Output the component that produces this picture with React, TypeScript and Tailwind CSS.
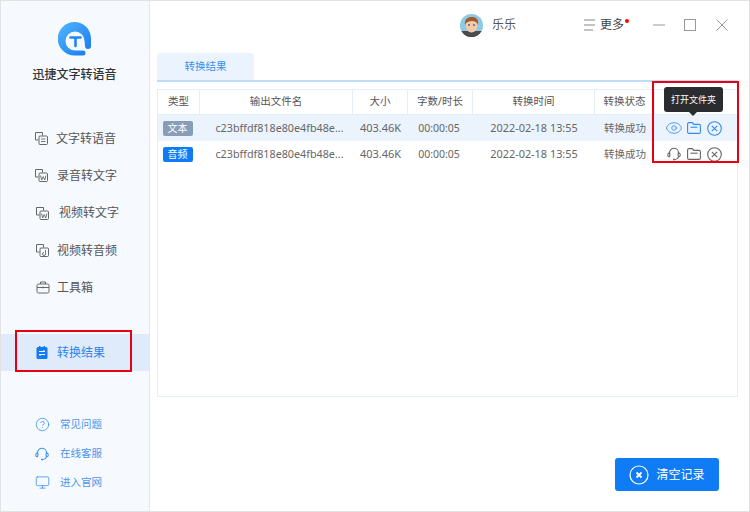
import { Eye, CircleHelp, Monitor } from 'lucide-react'

const font = { fontFamily: '"Noto Sans", "Noto Sans CJK SC", sans-serif' }

function DocIcon({ glyph }: { glyph: string }) {
  return (
    <svg width="15" height="15" viewBox="0 0 15 15" fill="none" stroke="#666" strokeWidth="1">
      <path d="M4.500 9H1.500V1.500h7v3" />
      <rect x="5" y="5" width="8.500" height="8.500" rx="1" />
      <path d={glyph} strokeWidth="0.9" />
    </svg>
  )
}

function HeadsetIcon({ color, size }: { color: string; size: number }) {
  return (
    <svg width={size} height={size} viewBox="0 0 14 14" fill="none" stroke={color} strokeWidth="1.100">
      <path d="M2.500 7V5.800a4.500 4.500 0 0 1 9 0V7" />
      <path d="M2.500 5.500C1.300 6 .7 7 .7 8s.7 1.700 1.800 1.800c.5-1.300.5-3 0-4.300z" />
      <path d="M11.500 5.500c1.200.5 1.800 1.500 1.800 2.500s-.7 1.700-1.800 1.800c-.5-1.300-.5-3 0-4.300z" />
      <path d="M11.500 10c-.7 1.500-2 2.500-3.500 2.500" />
      <circle cx="7" cy="12.500" r="1" fill={color} stroke="none" />
    </svg>
  )
}

function FolderIcon({ color }: { color: string }) {
  return (
    <svg width="14" height="12" viewBox="0 0 14 12" fill="none" stroke={color} strokeWidth="1.100">
      <path d="M.6 2A1.400 1.400 0 0 1 2 .6h3.300L6.800 2.400H12A1.400 1.400 0 0 1 13.400 3.800V10A1.400 1.400 0 0 1 12 11.400H2A1.400 1.400 0 0 1 .6 10z" />
      <path d="M3.500 5.200h7" />
    </svg>
  )
}

function CloseIcon({ color }: { color: string }) {
  return (
    <svg width="15" height="15" viewBox="0 0 15 15" fill="none" stroke={color} strokeWidth="1.100">
      <circle cx="7.500" cy="7.500" r="6.800" />
      <path d="M4.800 4.800l5.400 5.400M10.200 4.800l-5.400 5.400" />
    </svg>
  )
}

const navItems = [
  { label: '文字转语音', glyph: 'M7 8h4.500M7 10.500h4.500', ml: 'ml-[33px]', gap: 'gap-[7px]' },
  { label: '录音转文字', glyph: 'M6.500 7.500l1.200 4.500 1.500-3.500 1.500 3.500 1.300-4.500', ml: 'ml-[33px]', gap: 'gap-[8px]' },
  { label: '视频转文字', glyph: 'M6.500 7.500l1.200 4.500 1.500-3.500 1.500 3.500 1.300-4.500', ml: 'ml-[34px]', gap: 'gap-[9px]' },
  { label: '视频转音频', glyph: 'M10.500 7v4M10.500 11a1.500 1.500 0 1 1-1.500-1.500', ml: 'ml-[34px]', gap: 'gap-[7px]' },
]

function Sidebar() {
  return (
    <aside className="flex h-full w-[149px] shrink-0 flex-col border-r border-[#dfe9f5] bg-[#f6faff]">
      <div className="mt-[21px] flex flex-col items-center pr-[1px]">
        <svg width="34" height="34" viewBox="0 0 34 34" fill="none">
          <defs>
            <linearGradient id="lg" x1="0" y1="0" x2="1" y2="1">
              <stop offset="0" stopColor="#52b8fb" />
              <stop offset="1" stopColor="#1678f0" />
            </linearGradient>
          </defs>
          <path
            fill="url(#lg)"
            d="M16.500 0A16.500 16.500 0 0 1 33 16.500V24a3 3 0 0 1-6 0L26.500 19A9.500 9.500 0 1 0 17 28.500H25a2.500 2.500 0 0 1 0 5H16.500A16.500 16.500 0 0 1 16.500 0z"
          />
          <path d="M12.500 15.500h10M17.500 16v8" stroke="#1e86f5" strokeWidth="2.600" strokeLinecap="round" />
        </svg>
        <div className="mt-[10px] text-[12px] font-medium leading-[18px] text-[#333]">迅捷文字转语音</div>
      </div>

      <nav className="mt-[36px] flex flex-col">
        {navItems.map((item) => (
          <div key={item.label} className={`flex h-[37.300px] items-center ${item.ml} ${item.gap} text-[12px] text-[#555]`}>
            <DocIcon glyph={item.glyph} />
            <span>{item.label}</span>
          </div>
        ))}
        <div className="ml-[35px] flex h-[37.300px] items-center gap-[7px] text-[12px] text-[#555]">
          <svg width="14" height="13" viewBox="0 0 14 13" fill="none" stroke="#666">
            <rect x="1" y="3" width="12" height="9" rx="1.500" />
            <path d="M4.500 3V1h5v2M1 6.500h12M7 5.500v2" />
          </svg>
          <span>工具箱</span>
        </div>
      </nav>

      <div className="mt-[28px] flex h-[37px] items-center gap-[9px] bg-[#dfeafa] pl-[35px] text-[12px] text-[#2a86ee]">
        <svg width="12" height="13" viewBox="0 0 12 13">
          <rect x="0.500" y="1" width="11" height="12" rx="1.500" fill="#0f7bf5" />
          <rect x="3" y="0" width="1.500" height="2.500" fill="#0f7bf5" />
          <rect x="7.500" y="0" width="1.500" height="2.500" fill="#0f7bf5" />
          <path d="M3 5.500h6l-1.500-1M9 8.500H3l1.500 1" stroke="#fff" fill="none" />
        </svg>
        <span>转换结果</span>
      </div>

      <div className="mt-[39px] flex flex-col text-[10.500px] text-[#4a94ec]">
        <div className="flex h-[29px] items-center gap-[10px] pl-[34px]">
          <CircleHelp size={15} strokeWidth={1.300} color="#3f93f0" />
          <span>常见问题</span>
        </div>
        <div className="flex h-[29px] items-center gap-[11px] pl-[34px]">
          <HeadsetIcon color="#3f93f0" size={14} />
          <span>在线客服</span>
        </div>
        <div className="flex h-[29px] items-center gap-[10px] pl-[34px]">
          <Monitor size={15} strokeWidth={1.300} color="#3f93f0" />
          <span>进入官网</span>
        </div>
      </div>
    </aside>
  )
}

function TopBar() {
  return (
    <div className="flex h-[52px] items-center pb-[4px]">
      <svg className="ml-[311px]" width="23" height="23" viewBox="0 0 23 23">
        <defs>
          <clipPath id="av"><circle cx="11.500" cy="11.500" r="11.500" /></clipPath>
        </defs>
        <g clipPath="url(#av)">
          <rect width="23" height="23" fill="#8cc9e4" />
          <rect y="17" width="23" height="6" fill="#4b4b4b" />
          <ellipse cx="11.500" cy="11.500" rx="6" ry="7" fill="#f3c9a8" />
          <path d="M5 11C4 4 9 3 12 3s7 1 6 8c-1-3-3-4-6-4s-6 1-7 4z" fill="#a45a2a" />
          <circle cx="9" cy="11" r="1" fill="#4b6a9a" />
          <circle cx="14" cy="11" r="1" fill="#4b6a9a" />
        </g>
      </svg>
      <span className="ml-[9px] text-[12px] text-[#555]">乐乐</span>
      <svg className="ml-[68px]" width="12" height="12" viewBox="0 0 12 12" stroke="#888" strokeWidth="1.200">
        <path d="M0 1h11M0 6h11M0 11h9" />
      </svg>
      <span className="relative ml-[4px] text-[12px] text-[#444]">
        更多
        <span className="absolute right-[-5px] top-[3px] h-[4px] w-[4px] rounded-full bg-[#f00]" />
      </span>
      <svg className="ml-[29px]" width="12" height="12" viewBox="0 0 12 12" stroke="#999">
        <path d="M0 6h12" />
      </svg>
      <svg className="ml-[19px]" width="12" height="12" viewBox="0 0 12 12" fill="none" stroke="#999">
        <rect x="0.500" y="0.500" width="11" height="11" />
      </svg>
      <svg className="ml-[20px]" width="12" height="12" viewBox="0 0 12 12" stroke="#999">
        <path d="M.5.5l11 11M11.500.5l-11 11" />
      </svg>
    </div>
  )
}

const cols = ['w-[42px]', 'w-[153px]', 'w-[55px]', 'w-[65px]', 'w-[122px]', 'w-[60px]']
const headers = ['类型', '输出文件名', '大小', '字数/时长', '转换时间', '转换状态']

function Row({ active }: { active?: boolean }) {
  const stroke = active ? '#2f8cf0' : '#666'
  return (
    <div className={`flex h-[26px] items-center leading-[16px] text-[#666] ${active ? 'bg-[#ebf3fd]' : ''}`}>
      <div className={`${cols[0]} flex justify-center pr-[3px]`}>
        <span className={`flex h-[15px] w-[30px] items-center justify-center rounded-[2px] text-[10px] text-white ${active ? 'bg-[#8a9db8]' : 'bg-[#0f7bf5]'}`}>
          {active ? '文本' : '音频'}
        </span>
      </div>
      <div className={`${cols[1]} pl-[6px] text-center text-[10.750px]`}>c23bffdf818e80e4fb48e...</div>
      <div className={`${cols[2]} text-center text-[11px]`}>403.46K</div>
      <div className={`${cols[3]} pr-[3px] text-center text-[10.500px]`}>00:00:05</div>
      <div className={`${cols[4]} text-center text-[10.900px]`}>2022-02-18 13:55</div>
      <div className={`${cols[5]} text-center text-[10.500px]`}>转换成功</div>
      <div className="flex flex-1 items-center pl-[8px]">
        <span className="flex w-[22px] justify-center pr-[1px]">
          {active ? <Eye size={18} strokeWidth={1.100} color={stroke} /> : <HeadsetIcon color={stroke} size={14} />}
        </span>
        <span className="ml-[2px]"><FolderIcon color={stroke} /></span>
        <span className="ml-[6px]"><CloseIcon color={stroke} /></span>
      </div>
    </div>
  )
}

function Results() {
  return (
    <div className="relative flex-1 pl-[8px] pr-[11px]">
      <div className="border-b-2 border-[#bcdcf9]">
        <div className="flex h-[27px] w-[97px] items-center justify-center rounded-t-[3px] bg-[#ebf4fe] text-[10.500px] text-[#3590f0]">转换结果</div>
      </div>
      <div className="mt-[7px] h-[308px] border border-[#e4eef9]">
        <div className="flex h-[25px] items-stretch border-b border-[#e4eef9] text-[10.500px] text-[#555]">
          {headers.map((h, i) => (
            <div key={h} className={`${cols[i]} flex items-center justify-center border-r border-[#e4eef9]`}>{h}</div>
          ))}
        </div>
        <Row active />
        <Row />
      </div>
      <div className="mt-[61px] flex justify-end pr-[19px]">
        <button className="flex h-[33px] w-[104px] items-center justify-center gap-[7px] rounded-[3px] bg-[#0f7bf5] text-[12px] text-white">
          <svg width="20" height="20" viewBox="0 0 20 20" fill="none" stroke="#fff">
            <circle cx="10" cy="10" r="9" strokeWidth="1.200" />
            <path d="M7.500 7.500l5 5M12.500 7.500l-5 5" strokeWidth="1.800" />
          </svg>
          清空记录
        </button>
      </div>

      {/* tooltip + highlight drawn over the table */}
      <div className="absolute left-[515px] top-[34px] flex h-[25px] w-[59px] items-center justify-center rounded-[3px] bg-[#2b2c2f] text-[9px] text-white">
        打开文件夹
        <span className="absolute bottom-[-4px] left-[25px] h-0 w-0 border-x-[4px] border-t-[4px] border-x-transparent border-t-[#2b2c2f]" />
      </div>
      <div className="absolute left-[503px] top-[28px] h-[82px] w-[87px] border-2 border-[#e60012]" />
    </div>
  )
}

export default function App() {
  return (
    <div className="relative flex h-[512px] w-[750px] overflow-hidden border border-[#e2e2e2] bg-white" style={font}>
      <div className="flex h-full w-[148px] shrink-0">
        <Sidebar />
      </div>
      <main className="flex min-w-0 flex-1 flex-col">
        <TopBar />
        <Results />
      </main>
      <div className="absolute left-[14px] top-[329px] h-[42px] w-[117px] border-2 border-[#e60012]" />
    </div>
  )
}
